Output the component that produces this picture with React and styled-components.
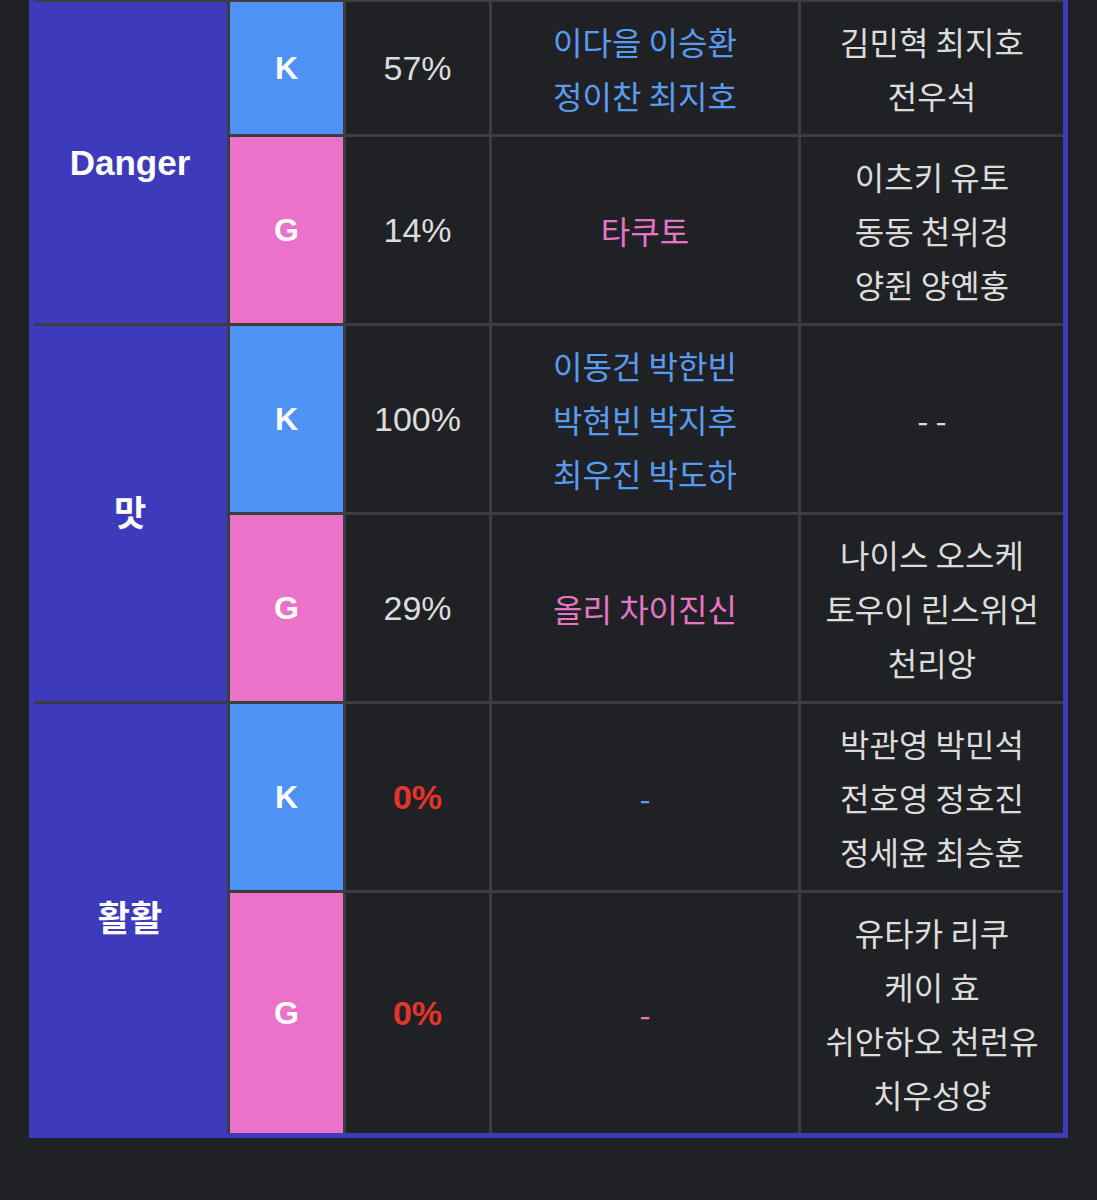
import React from "react";
import styled, { createGlobalStyle } from "styled-components";

const Global = createGlobalStyle`
  html, body { margin: 0; padding: 0; background: #202124; }
  body { font-family: "Liberation Sans", "Noto Sans CJK KR", sans-serif; }
`;

const Page = styled.div`
  padding: 0 29px 60px 29px;
  min-height: 1200px;
  box-sizing: border-box;
  background: #202124;
`;

const Grid = styled.div`
  display: grid;
  grid-template-columns: 193px 113px 143px 306px 262px;
  gap: 3px;
  width: 1039px;
  box-sizing: border-box;
  background: #3c3d40;
  border: 5px solid #3d3bbb;
  border-top: none;
  padding-top: 2px;
`;

const Cell = styled.div`
  display: flex;
  flex-direction: column;
  align-items: center;
  justify-content: center;
  text-align: center;
  background: #202124;
  padding: 12px 4px;
  line-height: 54px;
  font-size: 34px;
  color: #dcdcdc;
`;

const GroupCell = styled(Cell)`
  grid-row: span 2;
  background: #3d3bbb;
  color: #ffffff;
  font-weight: 700;
  font-size: 35px;
  margin-left: -1px;
`;

const TypeCell = styled(Cell)`
  background: ${(p) => (p.$type === "K" ? "#4e92f5" : "#ea73c9")};
  color: #ffffff;
  font-weight: 700;
  font-size: 32px;
`;

const PctCell = styled(Cell)`
  color: ${(p) => (p.$zero ? "#e3352a" : "#dcdcdc")};
  font-weight: ${(p) => (p.$zero ? 700 : 400)};
`;

const NameCell = styled(Cell)`
  color: ${(p) => p.$color};
  font-family: "Noto Sans CJK KR", "Liberation Sans", sans-serif;
  font-size: 32px;
`;

const Line = styled.span`
  display: block;
  white-space: nowrap;
`;

const data = [
  {
    group: "Danger",
    rows: [
      { type: "K", pct: "57%", mine: ["이다을 이승환", "정이찬 최지호"], other: ["김민혁 최지호", "전우석"] },
      { type: "G", pct: "14%", mine: ["타쿠토"], other: ["이츠키 유토", "동동 천위겅", "양쥔 양옌훙"] },
    ],
  },
  {
    group: "맛",
    rows: [
      { type: "K", pct: "100%", mine: ["이동건 박한빈", "박현빈 박지후", "최우진 박도하"], other: ["- -"] },
      { type: "G", pct: "29%", mine: ["올리 차이진신"], other: ["나이스 오스케", "토우이 린스위언", "천리앙"] },
    ],
  },
  {
    group: "활활",
    rows: [
      { type: "K", pct: "0%", zero: true, mine: ["-"], other: ["박관영 박민석", "전호영 정호진", "정세윤 최승훈"] },
      { type: "G", pct: "0%", zero: true, mine: ["-"], other: ["유타카 리쿠", "케이 효", "쉬안하오 천런유", "치우성양"] },
    ],
  },
];

export default function App() {
  return (
    <>
      <Global />
      <Page>
        <Grid>
          {data.map((g) =>
            g.rows.map((r, i) => (
              <React.Fragment key={g.group + r.type}>
                {i === 0 && <GroupCell>{g.group}</GroupCell>}
                <TypeCell $type={r.type}>{r.type}</TypeCell>
                <PctCell $zero={r.zero}>{r.pct}</PctCell>
                <NameCell $color={r.type === "K" ? "#5a9bf2" : "#e675c6"}>
                  {r.mine.map((l) => (
                    <Line key={l}>{l}</Line>
                  ))}
                </NameCell>
                <NameCell $color="#dcdcdc">
                  {r.other.map((l) => (
                    <Line key={l}>{l}</Line>
                  ))}
                </NameCell>
              </React.Fragment>
            ))
          )}
        </Grid>
      </Page>
    </>
  );
}
